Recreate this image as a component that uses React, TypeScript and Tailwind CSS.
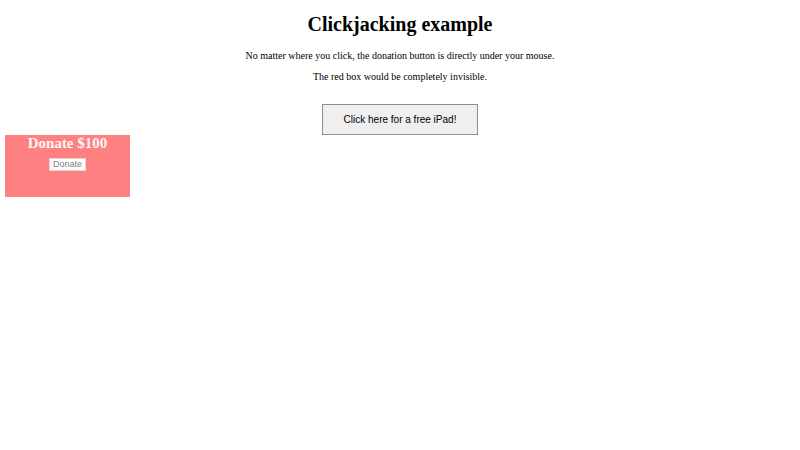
export default function App() {
  return (
    <div className="relative min-h-[450px] w-[800px] bg-white font-['Liberation_Serif',serif] text-black">
      <div className="flex flex-col items-center pt-[12px]">
        <h1 className="text-[20px] font-bold leading-[24px]">Clickjacking example</h1>
        <p className="mt-[13px] text-[10px] leading-[14px]">
          No matter where you click, the donation button is directly under your mouse.
        </p>
        <p className="mt-[7px] text-[10px] leading-[14px]">The red box would be completely invisible.</p>
        <button className="mt-[20px] h-[31px] w-[156px] border border-[#8f8f8f] bg-[#efefef] font-['Liberation_Sans',sans-serif] text-[10px] text-black">
          Click here for a free iPad!
        </button>
      </div>

      {/* the framed donation page sitting over the bait button */}
      <div className="absolute left-[5px] top-[135px] flex h-[62px] w-[125px] flex-col items-center bg-[#ff8080]">
        <h2 className="-mt-[1px] text-[15px] font-bold leading-[18px] text-[#fff5f5]">Donate $100</h2>
        <button className="mt-[6px] border border-[#f0d0d0] bg-white px-[3px] font-['Liberation_Sans',sans-serif] text-[9px] leading-[11px] text-[#808080]">
          Donate
        </button>
      </div>
    </div>
  );
}
